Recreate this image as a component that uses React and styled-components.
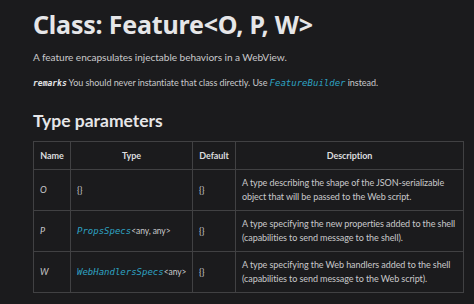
import React from 'react'
import styled, { createGlobalStyle } from 'styled-components'

const Global = createGlobalStyle`
    html, body {
        margin: 0;
        padding: 0;
        background: #1b1b1d;
    }
    body {
        font-family: Lato, "Noto Sans", sans-serif;
        color: #c9c9cb;
    }
`

const Page = styled.div`
    width: 474px;
    height: 304px;
    overflow: hidden;
    padding: 8px 11px 0 33px;
    box-sizing: border-box;
`

const Title = styled.h1`
    margin: 0;
    font-family: "Noto Sans", sans-serif;
    font-size: 25px;
    line-height: 32px;
    font-weight: 700;
    color: #e6e6e8;
    letter-spacing: -0.2px;
`

const Para = styled.p`
    margin: ${p => p.$top}px 0 0;
    font-size: ${p => p.$size}px;
    line-height: 14px;
    letter-spacing: -0.05px;
`

const Code = styled.code`
    font-family: "DejaVu Sans Mono", monospace;
    font-style: italic;
    font-size: ${p => p.$bold ? 8 : 9}px;
    letter-spacing: 0;
    color: ${p => p.$link ? '#2ea3c3' : '#e6e6e8'};
    font-weight: ${p => p.$bold ? 700 : 400};
`

const Small = styled.span`
    font-size: 8.5px;
    color: #c9c9cb;
`

const SubTitle = styled.h2`
    margin: 18px 0 0;
    font-size: 17.5px;
    line-height: 24px;
    font-weight: 700;
    color: #e6e6e8;
`

const Table = styled.table`
    margin-top: 8px;
    border-collapse: collapse;
    width: 430px;
    table-layout: fixed;
    font-size: 9px;
    letter-spacing: -0.08px;
`

const Th = styled.th`
    border: 1px solid #414143;
    height: 27px;
    padding: 0;
    font-weight: 700;
    color: #dcdcde;
    text-align: center;
`

const Td = styled.td`
    border: 1px solid #414143;
    height: 40px;
    padding: 0 3px 0 6px;
    line-height: 14px;
    vertical-align: middle;
    font-style: ${p => p.$italic ? 'italic' : 'normal'};
`

const rows = [
    {
        name: 'O',
        type: null,
        desc: 'A type describing the shape of the JSON-serializable object that will be passed to the Web script.',
    },
    {
        name: 'P',
        type: ['PropsSpecs', '<any, any>'],
        desc: 'A type specifying the new properties added to the shell (capabilities to send message to the shell).',
    },
    {
        name: 'W',
        type: ['WebHandlersSpecs', '<any>'],
        desc: 'A type specifying the Web handlers added to the shell (capabilities to send message to the Web script).',
    },
]

const App = () => {
    return (
        <Page>
            <Global />
            <Title>Class: Feature&lt;O, P, W&gt;</Title>
            <Para $top={10} $size={10.1}>A feature encapsulates injectable behaviors in a WebView.</Para>
            <Para $top={12} $size={9}>
                <Code $bold>remarks</Code> You should never instantiate that class directly. Use <Code $link>FeatureBuilder</Code> instead.
            </Para>
            <SubTitle>Type parameters</SubTitle>
            <Table>
                <colgroup>
                    <col style={{ width: 37 }} />
                    <col style={{ width: 122 }} />
                    <col style={{ width: 43 }} />
                    <col style={{ width: 228 }} />
                </colgroup>
                <thead>
                    <tr>
                        <Th>Name</Th>
                        <Th>Type</Th>
                        <Th>Default</Th>
                        <Th>Description</Th>
                    </tr>
                </thead>
                <tbody>
                    {rows.map(row => (
                        <tr key={row.name}>
                            <Td $italic>{row.name}</Td>
                            <Td>
                                {row.type ? (<><Code $link>{row.type[0]}</Code><Small>{row.type[1]}</Small></>) : '{}'}
                            </Td>
                            <Td>{'{}'}</Td>
                            <Td>{row.desc}</Td>
                        </tr>
                    ))}
                </tbody>
            </Table>
        </Page>
    )
}

export default App
